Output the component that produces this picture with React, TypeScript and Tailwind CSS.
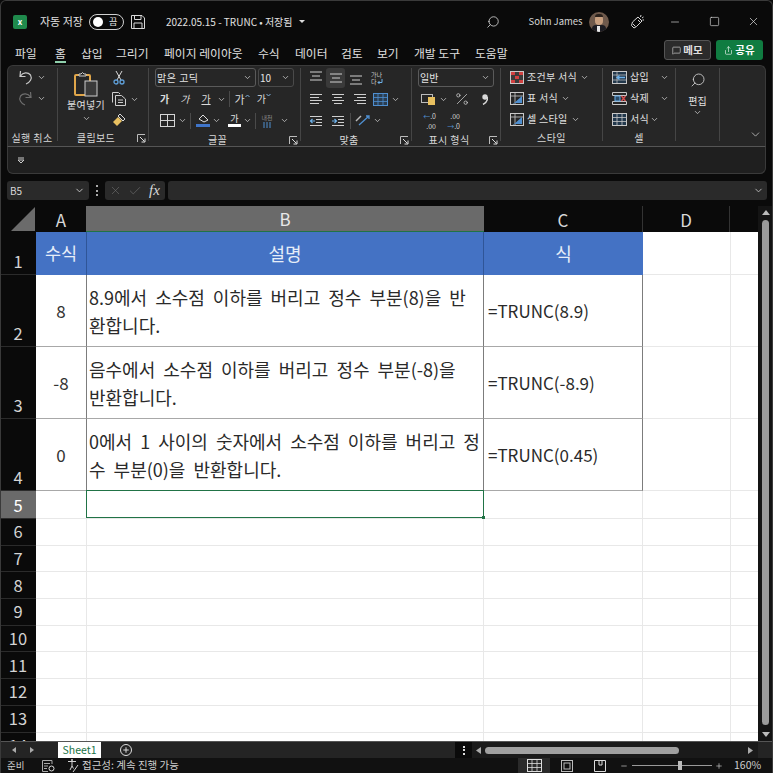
import React from "react";
import { ChevronDown, Search, Minus, Square, X, Check, MessageSquare, Share, Percent, Plus } from "lucide-react";

const font = "font-['Noto_Sans_CJK_KR','Noto_Sans',sans-serif]";

function Chev({ className = "" }: { className?: string }) {
  return <ChevronDown size={9} strokeWidth={2} className={"shrink-0 text-[#d0d0d0] " + className} />;
}

function Launcher() {
  return (
    <svg width="9" height="9" viewBox="0 0 9 9" className="shrink-0">
      <path d="M0.5 8V0.5H8" fill="none" stroke="#bbb" />
      <path d="M3 3L7.5 7.5M4.5 8H8V4.5" fill="none" stroke="#ddd" />
    </svg>
  );
}

function Lines({ kind, color = "#cfcfcf", n = 4 }: { kind: string; color?: string; n?: number }) {
  const wide = [1, 13] as [number, number];
  const alt = (kind === "l" ? [1, 10] : kind === "c" ? [3, 11] : [4, 13]) as [number, number];
  const rows = Array.from({ length: n }, (_, i) => (i % 2 === 0 ? wide : alt));
  return (
    <svg width="14" height="12" viewBox="0 0 14 12" className="shrink-0">
      {rows.map((r, i) => (
        <path key={i} d={`M${r[0]} ${(n === 3 ? 2 : 1.5) + i * (n === 3 ? 4 : 3)}H${r[1]}`} stroke={color} strokeWidth="1" />
      ))}
    </svg>
  );
}

function Indent({ right }: { right?: boolean }) {
  return (
    <svg width="14" height="12" viewBox="0 0 14 12" className="shrink-0">
      <path d="M1 1.5H13M7 4.5H13M7 7.5H13M1 10.5H13" stroke="#cfcfcf" />
      <path d={right ? "M1 6H5M3.5 4L5.5 6L3.5 8" : "M6 6H2M3.5 4L1.5 6L3.5 8"} fill="none" stroke="#6db0e8" strokeWidth="1.2" />
    </svg>
  );
}

function GroupLabel({ text, launcher }: { text: string; launcher?: boolean }) {
  return (
    <div className={"relative flex h-[17px] shrink-0 items-center justify-center text-[10px] leading-none tracking-[0.4px] text-[#d8d8d8] " + (launcher ? "pr-[14px]" : "")}>
      <span className="whitespace-nowrap">{text}</span>
      {launcher && (
        <span className="absolute right-0 top-[5px]">
          <Launcher />
        </span>
      )}
    </div>
  );
}

function Group({ w, label, launcher, children }: { w: string; label: string; launcher?: boolean; children: React.ReactNode }) {
  return (
    <div className={"flex shrink-0 flex-col " + w}>
      <div className="flex grow">{children}</div>
      <GroupLabel text={label} launcher={launcher} />
    </div>
  );
}

function Sep() {
  return <div className="mx-[2px] mt-[2px] h-[73px] w-px shrink-0 bg-[#454545]" />;
}

function KoGa({ className = "" }: { className?: string }) {
  return <span className={"text-[10px] leading-none text-[#dcdcdc] " + className}>가</span>;
}

function GridIcon({ color = "#cfcfcf", accent }: { color?: string; accent?: string }) {
  return (
    <svg width="15" height="13" viewBox="0 0 15 13" className="shrink-0">
      <rect x="0.5" y="0.5" width="14" height="12" fill={accent ?? "none"} stroke={color} />
      <path d="M0.5 4.5H14.5M0.5 8.5H14.5M5 .5V12.5M10 .5V12.5" stroke={color} strokeWidth="0.8" />
    </svg>
  );
}

function PlainGrid() {
  return (
    <svg width="15" height="13" viewBox="0 0 15 13" className="shrink-0">
      <rect x="0.5" y="0.5" width="14" height="12" fill="none" stroke="#d4d4d4" />
      <path d="M0.5 6.5H14.5M7.5 .5V12.5" stroke="#d4d4d4" />
    </svg>
  );
}

function StyleIcon() {
  return (
    <svg width="14" height="13" viewBox="0 0 14 13" className="shrink-0">
      <rect x="0.5" y="0.5" width="13" height="12" fill="none" stroke="#c8c8c8" />
      <path d="M0.5 4H13.5M5 .5V12.5" stroke="#c8c8c8" strokeWidth="0.8" />
      <path d="M3 12L12 4V11H3Z" fill="#4f8fd0" />
    </svg>
  );
}

function InsertIcon() {
  return (
    <svg width="15" height="13" viewBox="0 0 15 13" className="shrink-0">
      <rect x="0.5" y="0.5" width="14" height="12" fill="#22384c" stroke="#c8c8c8" />
      <path d="M5 .5V12.5M0.5 4H14.5M0.5 9H14.5" stroke="#c8c8c8" strokeWidth="0.7" />
      <path d="M13 6.5H5M7.5 4.5L5 6.5L7.5 8.5" fill="none" stroke="#6db0e8" strokeWidth="1.3" />
    </svg>
  );
}

function DeleteIcon() {
  return (
    <svg width="15" height="13" viewBox="0 0 15 13" className="shrink-0">
      <path d="M.5 .5H14.5V3.5H.5ZM.5 9.5H14.5V12.5H.5Z" fill="none" stroke="#c8c8c8" />
      <rect x="3" y="4" width="5" height="5" fill="#2a4a68" stroke="#6db0e8" />
      <path d="M9.5 4L13.5 9M13.5 4L9.5 9" stroke="#d85050" strokeWidth="1.4" />
    </svg>
  );
}

const borderLight = "border-b border-r border-[#e8e8e8]";
const borderStrong = "border-b-[#a8a8a8] border-r-[#7c7c7c] border-b border-r";

function Row({ h, num, selected, children }: { h: string; num: string; selected?: boolean; children?: React.ReactNode }) {
  return (
    <div className={"flex shrink-0 " + h}>
      <div className={"flex w-[36px] shrink-0 items-end justify-center border-b border-[#2b2b2b] pb-[5px] text-[16.5px] leading-none " + (selected ? "bg-[#6a6a6a] text-white" : "bg-[#0a0a0a] text-[#d4d4d4]")}>
        {num}
      </div>
      {children ?? <EmptyCells />}
    </div>
  );
}

function TailCells() {
  return (
    <>
      <div className={"w-[88px] shrink-0 bg-white " + borderLight} />
      <div className="w-[27px] shrink-0 border-b border-[#e8e8e8] bg-white" />
    </>
  );
}

function EmptyCells() {
  return (
    <>
      <div className={"w-[51px] shrink-0 bg-white " + borderLight} />
      <div className={"w-[397px] shrink-0 bg-white " + borderLight} />
      <div className={"w-[159px] shrink-0 bg-white " + borderLight} />
      <TailCells />
    </>
  );
}

function DataRow({ num, a, b, c, h }: { num: string; a: string; b: string[]; c: string; h: string }) {
  return (
    <Row h={h} num={num}>
      <div className={"flex w-[51px] shrink-0 items-center justify-center bg-white text-[17px] text-[#333] " + borderStrong}>{a}</div>
      <div className={"flex w-[397px] shrink-0 flex-col justify-center bg-white pl-[2px] text-[18px] leading-[28px] text-[#2a2a2a] [word-spacing:4px] " + borderStrong}>
        {b.map((l) => (
          <div key={l} className="whitespace-nowrap">{l}</div>
        ))}
      </div>
      <div className={"flex w-[159px] shrink-0 items-center bg-white pl-[4px] text-[17px] text-[#2a2a2a] " + borderStrong}>{c}</div>
      <TailCells />
    </Row>
  );
}

const tabs: [string, string][] = [
  ["파일", "w-[40px]"],
  ["홈", "w-[26px]"],
  ["삽입", "w-[35px]"],
  ["그리기", "w-[48px]"],
  ["페이지 레이아웃", "w-[94px]"],
  ["수식", "w-[37px]"],
  ["데이터", "w-[46px]"],
  ["검토", "w-[36px]"],
  ["보기", "w-[37px]"],
  ["개발 도구", "w-[61px]"],
  ["도움말", "w-[40px]"],
];

export default function App() {
  return (
    <div className={"relative flex h-[773px] w-[773px] flex-col overflow-hidden bg-[#0a0a0a] text-[#e4e4e4] " + font}>
      {/* Title bar */}
      <div className="flex h-[41px] shrink-0 items-center pl-[13px] pt-[2px]">
        <div className="flex h-[14px] w-[14px] items-center justify-center rounded-[2px] bg-[#1f8a4c] text-[8px] font-bold leading-none text-white">x</div>
        <span className="ml-[13px] whitespace-nowrap text-[11px] text-[#e0e0e0]">자동 저장</span>
        <div className="ml-[6px] flex h-[16px] w-[35px] items-center rounded-full border border-[#d0d0d0] pl-[3px]">
          <div className="h-[10px] w-[10px] rounded-full bg-white" />
          <span className="ml-[6px] text-[9px] leading-none">끔</span>
        </div>
        <svg width="14" height="14" viewBox="0 0 14 14" className="ml-[7px] shrink-0">
          <path d="M.5 .5H11L13.5 3V13.5H.5ZM3.5 .5V4.5H10V.5M3 13.5V8H11V13.5" fill="none" stroke="#d8d8d8" />
        </svg>
        <span className="ml-[21px] whitespace-nowrap text-[10px] text-[#e0e0e0]">2022.05.15 - TRUNC • 저장됨</span>
        <svg width="6" height="3" viewBox="0 0 6 3" className="ml-[6px] shrink-0"><path d="M0 0H6L3 3Z" fill="#ddd" /></svg>
        <Search size={14} strokeWidth={1.4} className="ml-[181px] shrink-0 -scale-x-100 text-[#d8d8d8]" />
        <span className="ml-[29px] w-[52px] whitespace-nowrap text-[9.5px] text-[#d8d8d8]">Sohn James</span>
        <div className="relative ml-[8px] h-[20px] w-[20px] shrink-0 overflow-hidden rounded-full bg-[#6f5a4c]">
          <div className="absolute left-[6px] top-[3px] h-[10px] w-[8px] rounded-full bg-[#c8a080]" />
          <div className="absolute left-[6px] top-[2px] h-[3px] w-[8px] rounded-t-full bg-[#2a211c]" />
          <div className="absolute bottom-0 left-[3px] h-[7px] w-[14px] rounded-t-[4px] bg-[#1c1c22]" />
          <div className="absolute bottom-0 left-[8.5px] h-[6px] w-[3px] bg-[#e8e8e8]" />
        </div>
        <svg width="15" height="15" viewBox="0 0 15 15" className="ml-[21px] shrink-0">
          <path d="M4 14L1.5 11.5L2.5 8L8 3L12 7L6.5 12.5Z M3 10L5.5 12.5M8 6L10 8" fill="none" stroke="#d8d8d8" />
          <path d="M11 1L10.5 3M13.5 3L12 4M14 6H12.5" stroke="#d8d8d8" />
        </svg>
        <Minus size={12} strokeWidth={1.3} className="ml-[24px] shrink-0 text-[#e0e0e0]" />
        <Square size={11} strokeWidth={1.4} className="ml-[28px] shrink-0 text-[#e0e0e0]" />
        <X size={13} strokeWidth={1.3} className="ml-[27px] shrink-0 text-[#e0e0e0]" />
      </div>

      {/* Tabs */}
      <div className="flex h-[24px] shrink-0 items-start pl-[15px] pr-[10px] text-[11.8px] leading-[24px] text-[#e0e0e0]">
        {tabs.map(([t, w]) => (
          <div key={t} className={"relative shrink-0 whitespace-nowrap " + w}>
            {t}
            {t === "홈" && <div className="absolute left-0 top-[20px] h-[2px] w-[11px] bg-[#8fd0ac]" />}
          </div>
        ))}
        <div className="ml-auto flex h-[20px] w-[47px] shrink-0 -translate-y-[1px] items-center justify-center gap-[2px] rounded-[3px] border border-[#555] bg-[#2b2b2b] text-[10.5px] font-bold leading-none">
          <MessageSquare size={9} strokeWidth={1.6} />
          <span>메모</span>
        </div>
        <div className="ml-[5px] flex h-[20px] w-[47px] shrink-0 -translate-y-[1px] items-center justify-center gap-[2px] rounded-[3px] bg-[#107c41] text-[10.5px] font-bold leading-none text-white">
          <Share size={9} strokeWidth={1.6} />
          <span>공유</span>
        </div>
      </div>

      {/* Ribbon */}
      <div className="mx-[7px] flex h-[81px] w-[759px] shrink-0 rounded-t-[6px] border border-b-0 border-[#3a3a3a] bg-[#262626] pl-[1px]">
        <Group w="w-[46px]" label="실행 취소">
          <div className="flex w-full flex-col items-center pt-[3px]">
            <div className="flex items-center gap-[4px]">
              <svg width="15" height="16" viewBox="0 0 15 16" className="shrink-0"><path d="M2.5 2L2 7.5H7.5M2.5 7C5 3 10 3 12.5 6C14.5 9.500 12 13.500 8 15" fill="none" stroke="#c8c8c8" strokeWidth="1.2" /></svg>
              <Chev />
            </div>
            <div className="mt-[5px] flex items-center gap-[4px]">
              <svg width="15" height="16" viewBox="0 0 15 16" className="shrink-0"><path d="M12.500 2L13 7.500H7.500M12.500 7C10 3 5 3 2.500 6C0.500 9.500 3 13.500 7 15" fill="none" stroke="#6e6e6e" strokeWidth="1.2" /></svg>
              <Chev className="text-[#5e5e5e]" />
            </div>
          </div>
        </Group>
        <Sep />
        <Group w="w-[86px]" label="클립보드" launcher>
          <div className="flex w-full pl-[2px] pt-[5px]">
            <div className="flex w-[48px] flex-col items-center">
              <svg width="24" height="26" viewBox="0 0 24 26" className="shrink-0">
                <rect x="1" y="4" width="15" height="20" rx="1" fill="none" stroke="#e0a64a" strokeWidth="2" />
                <path d="M5 5V3H7Q8.5 0 10 3H12V5Z" fill="#262626" stroke="#ccc" />
                <rect x="11" y="10" width="12" height="15" fill="#3a3a3a" stroke="#ccc" />
              </svg>
              <span className="mt-[1px] whitespace-nowrap text-[10px] leading-[14px] tracking-[0.3px] text-[#e0e0e0]">붙여넣기</span>
              <Chev className="mt-[2px]" />
            </div>
            <div className="ml-[2px] flex flex-col items-start gap-[7px]">
              <svg width="14" height="14" viewBox="0 0 14 14" className="shrink-0">
                <path d="M4 0L9 9M10 0L5 9" stroke="#d8d8d8" />
                <circle cx="4" cy="11" r="2" fill="none" stroke="#5f9fd8" strokeWidth="1.3" />
                <circle cx="10" cy="11" r="2" fill="none" stroke="#5f9fd8" strokeWidth="1.3" />
              </svg>
              <div className="flex items-center gap-[4px]">
                <svg width="14" height="14" viewBox="0 0 14 14" className="shrink-0">
                  <path d="M.5 10.500V.5H6.500L8 2" fill="none" stroke="#cfcfcf" />
                  <path d="M3.500 3.500H9.500L13.500 7V13.500H3.500Z M6 8H11M6 10.500H11" fill="#262626" stroke="#cfcfcf" />
                </svg>
                <Chev />
              </div>
              <svg width="14" height="14" viewBox="0 0 14 14" className="shrink-0">
                <path d="M8 1L13 6L11 8L6 3Z" fill="none" stroke="#d8d8d8" />
                <path d="M6 4L10 8L5 13L1 9Z" fill="#e8c060" />
              </svg>
            </div>
          </div>
        </Group>
        <Sep />
        <Group w="w-[147px]" label="글꼴" launcher>
          <div className="flex w-full flex-col pl-[4px] pt-[2px]">
            <div className="flex gap-[2px]">
              <div className="flex h-[19px] w-[101px] shrink-0 items-center justify-between rounded-[3px] border border-[#5a5a5a] pl-[1px] pr-[3px] text-[10px] tracking-[0.5px]">
                <span>맑은 고딕</span>
                <Chev />
              </div>
              <div className="flex h-[19px] w-[36px] shrink-0 items-center justify-between rounded-[3px] border border-[#4a4a4a] pl-[1px] pr-[3px] text-[10px]">
                <span>10</span>
                <Chev />
              </div>
            </div>
            <div className="mt-[2px] flex h-[20px] items-center pl-[5px]">
              <KoGa className="font-semibold" />
              <KoGa className="ml-[11px] italic text-[#aaa]" />
              <KoGa className="ml-[12px] underline" />
              <Chev className="ml-[6px]" />
              <div className="ml-[3px] h-[16px] w-px bg-[#4a4a4a]" />
              <span className="ml-[5px] text-[11px] leading-none text-[#dcdcdc]">가</span>
              <svg width="5" height="3" viewBox="0 0 5 3" className="mb-[7px] shrink-0"><path d="M.5 3L2.500 1L4.500 3" fill="none" stroke="#7fb0dc" /></svg>
              <KoGa className="ml-[7px]" />
              <svg width="5" height="3" viewBox="0 0 5 3" className="mb-[7px] shrink-0"><path d="M.5 0L2.500 2L4.500 0" fill="none" stroke="#7fb0dc" /></svg>
            </div>
            <div className="mt-[1px] flex h-[21px] items-center pl-[5px]">
              <PlainGrid />
              <Chev className="ml-[3px]" />
              <div className="ml-[3px] h-[16px] w-px bg-[#4a4a4a]" />
              <div className="ml-[5px] flex w-[14px] shrink-0 flex-col items-center">
                <svg width="11" height="9" viewBox="0 0 11 9" className="shrink-0"><path d="M5 1L10 6L6 8L1 5Z" fill="none" stroke="#ddd" /></svg>
                <div className="mt-[1px] h-[3px] w-[14px] bg-[#3f74c8]" />
              </div>
              <Chev className="ml-[2px]" />
              <div className="ml-[7px] flex w-[13px] shrink-0 flex-col items-center">
                <span className="text-[9px] leading-[9px] text-[#e0e0e0]">가</span>
                <div className="mt-[1px] h-[3px] w-[13px] bg-white" />
              </div>
              <Chev className="ml-[2px]" />
              <div className="ml-[3px] h-[16px] w-px bg-[#4a4a4a]" />
              <div className="ml-[4px] flex w-[14px] shrink-0 flex-col items-center">
                <span className="whitespace-nowrap text-[6px] leading-[8px] text-[#888]">내천</span>
                <svg width="8" height="6" viewBox="0 0 8 6" className="shrink-0"><path d="M1 0V6M4 0V6M7 0V6" stroke="#4f8fd0" /></svg>
              </div>
              <Chev className="ml-[6px]" />
            </div>
          </div>
        </Group>
        <Sep />
        <Group w="w-[106px]" label="맞춤" launcher>
          <div className="flex w-full flex-col pl-[6px] pt-[2px]">
            <div className="flex h-[20px] items-center">
              <div className="-mt-[4px]"><Lines kind="c" n={3} /></div>
              <div className="ml-[3px] flex h-[20px] w-[19px] shrink-0 items-center justify-center rounded-[3px] bg-[#3a3a3a]"><Lines kind="c" n={3} /></div>
              <div className="ml-[4px] pt-[4px]"><Lines kind="c" n={3} /></div>
              <div className="ml-[8px] flex w-[12px] shrink-0 flex-col">
                <span className="whitespace-nowrap text-[6px] leading-[7px] text-[#d0d0d0]">가나</span>
                <div className="flex items-center">
                  <span className="whitespace-nowrap text-[6px] leading-[7px] text-[#d0d0d0]">다</span>
                  <svg width="6" height="6" viewBox="0 0 6 6" className="shrink-0"><path d="M5 0V3.500H1M2.500 2L1 3.500L2.500 5" fill="none" stroke="#6db0e8" /></svg>
                </div>
              </div>
            </div>
            <div className="mt-[1px] flex h-[20px] items-center">
              <Lines kind="l" />
              <div className="ml-[8px]"><Lines kind="c" /></div>
              <div className="ml-[8px]"><Lines kind="r" /></div>
              <div className="ml-[6px]"><GridIcon color="#4f8fd0" accent="#2a3d50" /></div>
              <Chev className="ml-[3px]" />
            </div>
            <div className="mt-[1px] flex h-[21px] items-center">
              <Indent />
              <div className="ml-[8px]"><Indent right /></div>
              <div className="ml-[5px] h-[16px] w-px bg-[#4a4a4a]" />
              <svg width="16" height="14" viewBox="0 0 16 14" className="ml-[4px] shrink-0"><path d="M4 11L14 2M11 2H14V5" fill="none" stroke="#4f8fd0" strokeWidth="1.3" /><path d="M1 7L6 2" stroke="#bbb" strokeWidth="1.4" /></svg>
              <Chev className="ml-[2px]" />
            </div>
          </div>
        </Group>
        <Sep />
        <Group w="w-[84px]" label="표시 형식" launcher>
          <div className="flex w-full flex-col pl-[4px] pt-[2px]">
            <div className="flex h-[19px] w-[76px] shrink-0 items-center justify-between rounded-[3px] border border-[#5a5a5a] pl-[1px] pr-[3px] text-[10px]">
              <span>일반</span>
              <Chev />
            </div>
            <div className="mt-[2px] flex h-[20px] items-center pl-[3px]">
              <svg width="15" height="12" viewBox="0 0 15 12" className="shrink-0"><rect x="0.5" y="1.5" width="11" height="8" fill="none" stroke="#bbb" /><rect x="7" y="4" width="7" height="8" fill="#e8c060" /></svg>
              <Chev className="ml-[3px]" />
              <Percent size={16} strokeWidth={1.1} className="ml-[6px] shrink-0 text-[#d4d4d4]" />
              <svg width="6" height="11" viewBox="0 0 6 11" className="ml-[12px] shrink-0"><circle cx="3" cy="3" r="2.700" fill="#d8d8d8" /><path d="M5.700 3C5.800 6.500 4 9 1 10.500" fill="none" stroke="#d8d8d8" strokeWidth="1.400" /></svg>
            </div>
            <div className="mt-[1px] flex h-[21px] items-center gap-[8px] pl-[2px] text-[7px] leading-[10px]">
              <div className="flex w-[16px] shrink-0 flex-col items-end text-[#d4d4d4]">
                <span className="whitespace-nowrap"><span className="text-[#4f8fd0]">←</span>.0</span>
                <span>.00</span>
              </div>
              <div className="flex w-[16px] shrink-0 flex-col items-end text-[#d4d4d4]">
                <span>.00</span>
                <span className="whitespace-nowrap"><span className="text-[#4f8fd0]">→</span>.0</span>
              </div>
            </div>
          </div>
        </Group>
        <Sep />
        <Group w="w-[97px]" label="스타일">
          <div className="flex w-full flex-col gap-[7px] pl-[7px] pt-[4px] text-[10px] leading-[14px] tracking-[0.3px] text-[#e0e0e0]">
            <div className="flex items-center gap-[3px]">
              <svg width="14" height="13" viewBox="0 0 14 13" className="shrink-0"><rect x="0.5" y="0.5" width="13" height="12" fill="#3a3a3a" stroke="#c8c8c8" /><rect x="1" y="1" width="4" height="3" fill="#d04040" /><rect x="9" y="1" width="4" height="3" fill="#d04040" /><rect x="5" y="5" width="4" height="3" fill="#d04040" /><rect x="1" y="9" width="4" height="3" fill="#d04040" /><rect x="9" y="9" width="4" height="3" fill="#d04040" /></svg>
              <span className="whitespace-nowrap">조건부 서식</span><Chev />
            </div>
            <div className="flex items-center gap-[3px]"><StyleIcon /><span className="whitespace-nowrap">표 서식</span><Chev /></div>
            <div className="flex items-center gap-[3px]"><StyleIcon /><span className="whitespace-nowrap">셀 스타일</span><Chev /></div>
          </div>
        </Group>
        <Sep />
        <Group w="w-[68px]" label="셀">
          <div className="flex w-full flex-col gap-[7px] pl-[7px] pt-[4px] text-[10px] leading-[14px] tracking-[0.3px] text-[#e0e0e0]">
            <div className="flex items-center"><InsertIcon /><span className="ml-[3px] w-[27px] whitespace-nowrap">삽입</span><Chev className="ml-[3px]" /></div>
            <div className="flex items-center"><DeleteIcon /><span className="ml-[3px] w-[27px] whitespace-nowrap">삭제</span><Chev className="ml-[3px]" /></div>
            <div className="flex items-center"><GridIcon color="#c8c8c8" accent="#22384c" /><span className="ml-[3px] whitespace-nowrap">서식</span><Chev className="ml-[1px]" /></div>
          </div>
        </Group>
        <Sep />
        <div className="flex w-[39px] shrink-0 flex-col items-center pt-[6px]">
          <Search size={16} strokeWidth={1.3} className="shrink-0 -scale-x-100 text-[#cfcfcf]" />
          <span className="mt-[7px] text-[10px] leading-[12px] text-[#e0e0e0]">편집</span>
          <Chev className="mt-[1px]" />
        </div>
        <Sep />
        <div className="flex grow items-end justify-end pb-[5px] pr-[3px]">
          <ChevronDown size={13} strokeWidth={1.4} className="text-[#d0d0d0]" />
        </div>
      </div>

      {/* QAT */}
      <div className="mx-[7px] flex h-[28px] w-[759px] shrink-0 items-center rounded-b-[6px] border border-[#3a3a3a] border-t-[#555] bg-[#1f1f1f] pl-[9px]">
        <svg width="8" height="7" viewBox="0 0 8 7" className="shrink-0"><path d="M1 1H7M1 3L4 6L7 3Z" fill="none" stroke="#ccc" /></svg>
      </div>

      {/* Formula bar */}
      <div className="mt-[7px] flex h-[19px] shrink-0 items-center pl-[7px]">
        <div className="flex h-[19px] w-[82px] shrink-0 items-center justify-between rounded-[3px] bg-[#2a2a2a] pl-[3px] pr-[4px] text-[10px] text-[#d8d8d8]">
          <span>B5</span>
          <ChevronDown size={11} className="text-[#ccc]" />
        </div>
        <div className="ml-[7px] flex h-[11px] w-[2px] shrink-0 flex-col justify-between">
          <span className="h-[2px] w-[2px] bg-[#aaa]" /><span className="h-[2px] w-[2px] bg-[#aaa]" /><span className="h-[2px] w-[2px] bg-[#aaa]" />
        </div>
        <div className="ml-[7px] flex h-[19px] w-[60px] shrink-0 items-center rounded-[3px] bg-[#2a2a2a] pl-[4px]">
          <X size={13} strokeWidth={1} className="text-[#777]" />
          <Check size={14} strokeWidth={1} className="ml-[6px] text-[#777]" />
          <span className="ml-[7px] font-['Liberation_Serif',serif] text-[15px] italic leading-none text-[#d8d8d8]">fx</span>
        </div>
        <div className="ml-[3px] flex h-[19px] w-[599px] shrink-0 items-center justify-end rounded-[3px] bg-[#2a2a2a] pr-[3px]">
          <ChevronDown size={11} className="text-[#bbb]" />
        </div>
      </div>

      {/* Sheet + scrollbar */}
      <div className="mt-[6px] flex min-h-0 grow">
        <div className="flex w-[758px] shrink-0 flex-col overflow-hidden">
          {/* Column headers */}
          <div className="flex h-[26px] shrink-0 text-[17px] leading-none">
            <div className="relative w-[36px] shrink-0">
              <svg width="24" height="24" viewBox="0 0 24 24" className="absolute bottom-[1px] right-[1px]"><path d="M24 0V24H0Z" fill="#6b6b6b" /></svg>
            </div>
            <div className="flex w-[50px] shrink-0 items-center justify-center text-[#d8d8d8]">A</div>
            <div className="flex w-[398px] shrink-0 items-center justify-center border-b border-[#217346] bg-[#6a6a6a] text-[#e8e8e8]">B</div>
            <div className="flex w-[159px] shrink-0 items-center justify-center border-r border-[#333] text-[#d8d8d8]">C</div>
            <div className="flex w-[87px] shrink-0 items-center justify-center border-r border-[#333] text-[#d8d8d8]">D</div>
            <div className="w-[28px] shrink-0" />
          </div>
          <Row h="h-[43px]" num="1">
            <div className="flex w-[51px] shrink-0 items-center justify-center border-r border-[#2f5597] bg-[#4472c4] text-[17.5px] text-[#e6edf8]">수식</div>
            <div className="flex w-[397px] shrink-0 items-center justify-center border-r border-[#2f5597] bg-[#4472c4] text-[18px] text-[#e6edf8]">설명</div>
            <div className="flex w-[159px] shrink-0 items-center justify-center bg-[#4472c4] text-[18px] text-[#e6edf8]">식</div>
            <TailCells />
          </Row>
          <DataRow h="h-[72px]" num="2" a="8" b={["8.9에서 소수점 이하를 버리고 정수 부분(8)을 반", "환합니다."]} c="=TRUNC(8.9)" />
          <DataRow h="h-[72px]" num="3" a="-8" b={["음수에서 소수점 이하를 버리고 정수 부분(-8)을", "반환합니다."]} c="=TRUNC(-8.9)" />
          <DataRow h="h-[72px]" num="4" a="0" b={["0에서 1 사이의 숫자에서 소수점 이하를 버리고 정", "수 부분(0)을 반환합니다."]} c="=TRUNC(0.45)" />
          <Row h="h-[28px]" num="5" selected>
            <div className={"w-[51px] shrink-0 bg-white " + borderLight} />
            <div className={"relative w-[397px] shrink-0 bg-white " + borderLight}>
              <div className="absolute -left-[1px] -top-[1px] bottom-0 -right-[1px] border border-[#217346]" />
              <div className="absolute -bottom-[1px] -right-[2px] h-[3px] w-[3px] bg-[#217346]" />
            </div>
            <div className={"w-[159px] shrink-0 bg-white " + borderLight} />
            <TailCells />
          </Row>
          {["6", "7", "8", "9", "10", "11", "12", "13", "14"].map((n) => (
            <Row key={n} h="h-[26.7px]" num={n} />
          ))}
        </div>
        <div className="flex w-[15px] shrink-0 flex-col items-center bg-[#141414] pt-[4px]">
          <svg width="8" height="5" viewBox="0 0 8 5" className="shrink-0"><path d="M0 5H8L4 0Z" fill="#bbb" /></svg>
          <div className="mt-[5px] h-[505px] w-[7px] rounded-full bg-[#9a9a9a]" />
          <svg width="8" height="5" viewBox="0 0 8 5" className="mb-[4px] mt-auto shrink-0"><path d="M0 0H8L4 5Z" fill="#bbb" /></svg>
        </div>
      </div>

      {/* Sheet tabs row */}
      <div className="flex h-[17px] shrink-0 items-center border-t border-[#555] bg-[#242424]">
        <div className="ml-[12px] flex w-[46px] shrink-0 gap-[14px]">
          <svg width="4" height="6" viewBox="0 0 4 6" className="shrink-0"><path d="M4 0V6L0 3Z" fill="#aaa" /></svg>
          <svg width="4" height="6" viewBox="0 0 4 6" className="shrink-0"><path d="M0 0V6L4 3Z" fill="#aaa" /></svg>
        </div>
        <div className="flex h-[17px] w-[43px] shrink-0 items-center justify-center bg-white text-[10.5px] text-[#217346]">Sheet1</div>
        <div className="ml-[19px] flex h-[12px] w-[12px] shrink-0 items-center justify-center rounded-full border border-[#ddd]">
          <Plus size={8} strokeWidth={3} className="text-[#ddd]" />
        </div>
        <div className="ml-[323px] flex h-[17px] w-[17px] shrink-0 items-center justify-center bg-[#0a0a0a]">
          <div className="flex h-[9px] flex-col justify-between">
            <span className="h-[2px] w-[2px] bg-[#ddd]" /><span className="h-[2px] w-[2px] bg-[#ddd]" /><span className="h-[2px] w-[2px] bg-[#ddd]" />
          </div>
        </div>
        <div className="flex h-[17px] w-[286px] shrink-0 items-center bg-[#1a1a1a] pl-[4px]">
          <svg width="5" height="7" viewBox="0 0 5 7" className="shrink-0"><path d="M5 0V7L0 3.5Z" fill="#aaa" /></svg>
          <div className="ml-[4px] h-[7px] w-[194px] rounded-full bg-[#a0a0a0]" />
          <svg width="5" height="7" viewBox="0 0 5 7" className="ml-auto mr-[5px] shrink-0"><path d="M0 0V7L5 3.5Z" fill="#aaa" /></svg>
        </div>
      </div>

      {/* Status bar */}
      <div className="flex h-[15px] shrink-0 items-center bg-[#111] text-[9.5px] leading-none text-[#cfcfcf]">
        <span className="ml-[7px] w-[19px] whitespace-nowrap">준비</span>
        <svg width="13" height="12" viewBox="0 0 13 12" className="ml-[16px] shrink-0"><path d="M.5 .5H10V4M.5 .5V11.500H6M2 3.500H8M2 6H6M2 8.500H5" fill="none" stroke="#aaa" /><circle cx="9.500" cy="8.500" r="2.500" fill="#111" stroke="#ddd" /></svg>
        <svg width="13" height="13" viewBox="0 0 13 13" className="ml-[12px] shrink-0"><path d="M1 2.500H9M5 3V7L3 11M5 7L6.500 9.500M6 13L11 6" fill="none" stroke="#d4d4d4" /><circle cx="5" cy="1" r="1" fill="#d4d4d4" /></svg>
        <span className="ml-[2px] whitespace-nowrap text-[10.5px]">접근성: 계속 진행 가능</span>
        <div className="ml-auto flex items-center pr-[14px]">
          <div className="flex h-[15px] w-[32px] shrink-0 items-center justify-center bg-[#2a2a2a]">
            <GridIcon color="#ddd" />
          </div>
          <svg width="12" height="12" viewBox="0 0 12 12" className="ml-[11px] shrink-0"><rect x="0.5" y="0.5" width="11" height="11" fill="none" stroke="#bbb" /><rect x="3" y="3" width="6" height="6" fill="none" stroke="#bbb" /></svg>
          <svg width="12" height="12" viewBox="0 0 12 12" className="ml-[21px] shrink-0"><path d="M.5 .5H11.500V11.500H.5ZM5 .5V5H8V.5" fill="none" stroke="#ddd" /></svg>
          <Minus size={8} className="ml-[14px] shrink-0" />
          <div className="relative ml-[4px] h-px w-[80px] shrink-0 bg-[#999]">
            <div className="absolute -top-[4px] left-[46px] h-[9px] w-[4px] bg-[#bbb]" />
          </div>
          <Plus size={8} className="ml-[3px] shrink-0" />
          <span className="ml-[11px] w-[25px] whitespace-nowrap text-[10.5px]">160%</span>
        </div>
      </div>

      <div className="pointer-events-none absolute inset-0 rounded-t-[6px] border-x border-t border-[#3a3a3a]" />
    </div>
  );
}
